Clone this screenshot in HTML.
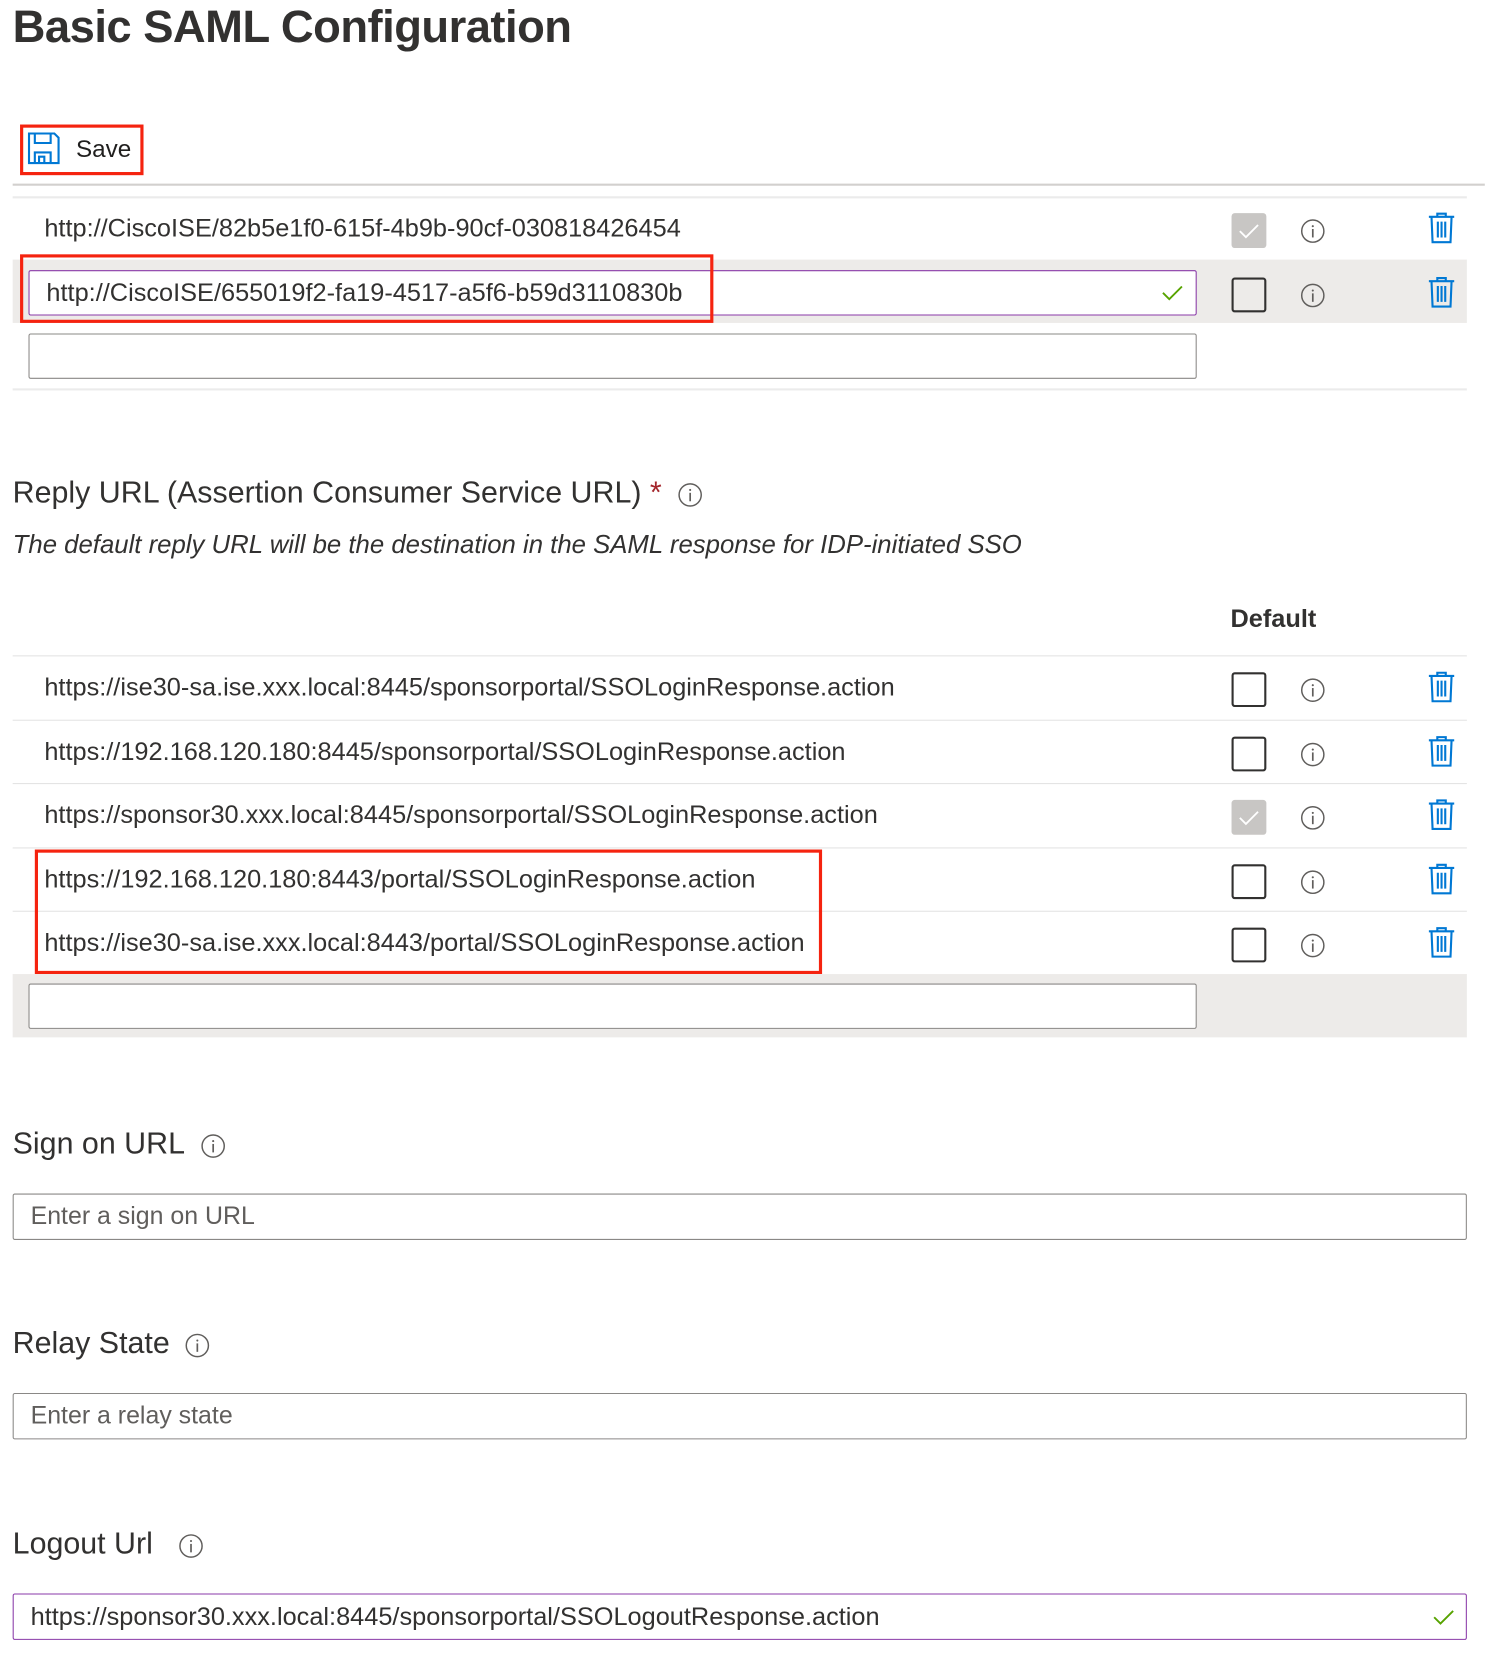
<!DOCTYPE html>
<html><head><meta charset="utf-8"><style>
html,body{margin:0;padding:0;background:#fff;width:1488px;height:1658px;overflow:hidden}
#w{position:absolute;left:0;top:0;width:1410px;height:1572px;transform:scale(1.0553);transform-origin:0 0;font-family:"Liberation Sans",sans-serif;color:#323130}
.a{position:absolute}
.t{position:absolute;font-size:24px;white-space:nowrap;line-height:1}
.h{position:absolute;font-size:28.8px;white-space:nowrap;line-height:1}
.hr{position:absolute;left:12px;width:1378px;height:1px;background:#e3e3e3}
.inp{position:absolute;box-sizing:border-box;border:1.5px solid #8a8886;border-radius:2px;background:#fff}
.cb{position:absolute;left:1167px;width:33px;height:33px;box-sizing:border-box;border:2px solid #323130;border-radius:3px}
.cbc{border:none;background:#c8c6c4}
.red{position:absolute;border:3px solid #f5230f;box-sizing:border-box}
</style></head><body><div id="w">
<svg width="0" height="0" style="position:absolute"><defs>
<symbol id="info" viewBox="0 0 24 24"><circle cx="12" cy="12" r="10.5" fill="none" stroke="#605e5c" stroke-width="1.4"/><rect x="11.2" y="10" width="1.6" height="8" fill="#605e5c"/><circle cx="12" cy="7.3" r="1" fill="#605e5c"/></symbol>
<symbol id="trash" viewBox="0 0 26 30"><path d="M9 4V1.5h8V4M1 4.5h24M3.5 4.5l1 24h17l1-24M9.5 9v15M13 9v15M16.5 9v15" fill="none" stroke="#0078d4" stroke-width="2"/></symbol>
<symbol id="chk" viewBox="0 0 24 24"><path d="M3 12.5l6 6L21 6.5" fill="none" stroke="currentColor" stroke-width="1.8"/></symbol>
</defs></svg>

<div class="a" style="left:12px;top:3px;font-size:43px;font-weight:bold;letter-spacing:-0.5px;color:#323130;white-space:nowrap;line-height:1.1">Basic SAML Configuration</div>

<div class="red" style="left:19px;top:118px;width:117px;height:48px"></div>
<svg class="a" style="left:26px;top:125px" width="31" height="31" viewBox="0 0 31 31"><path d="M1.5 1.5h24l4 4v24h-28z M7 1.5v9h15v-9 M7 29.5v-10h15v10 M11 29.5v-6h5v6" fill="none" stroke="#0078d4" stroke-width="2"/></svg>
<div class="t" style="left:72px;top:130px;font-size:23px;color:#201f1e">Save</div>

<div class="a" style="left:12px;top:174px;width:1395px;height:2px;background:#d2d0ce"></div>
<div class="hr" style="top:186px;height:2px;background:#ebebeb"></div>

<div class="t" style="left:42px;top:205px">http://CiscoISE/82b5e1f0-615f-4b9b-90cf-030818426454</div>
<div class="cb cbc" style="top:202px"><svg width="33" height="33" style="color:#fff"><use href="#chk" x="5" y="5" width="23" height="23"/></svg></div>
<svg class="a" style="left:1232px;top:207px" width="24" height="24"><use href="#info"/></svg>
<svg class="a" style="left:1353px;top:201px" width="26" height="30"><use href="#trash"/></svg>

<div class="a" style="left:12px;top:246px;width:1378px;height:60px;background:#edebe9"></div>
<div class="inp" style="left:27px;top:256px;width:1107px;height:43px;border-color:#8a3aa8"></div>
<div class="t" style="left:44px;top:266px">http://CiscoISE/655019f2-fa19-4517-a5f6-b59d3110830b</div>
<svg class="a" style="left:1099px;top:265px;color:#57a300" width="24" height="24"><use href="#chk"/></svg>
<div class="cb" style="top:263px"></div>
<svg class="a" style="left:1232px;top:268px" width="24" height="24"><use href="#info"/></svg>
<svg class="a" style="left:1353px;top:262px" width="26" height="30"><use href="#trash"/></svg>
<div class="red" style="left:19px;top:241px;width:657px;height:65px"></div>

<div class="inp" style="left:27px;top:316px;width:1107px;height:43px"></div>
<div class="hr" style="top:368px;height:2px;background:#ebebeb"></div>

<div class="h" style="left:12px;top:453px">Reply URL (Assertion Consumer Service URL) <span style="color:#a4262c">*</span></div>
<svg class="a" style="left:642px;top:457px" width="24" height="24"><use href="#info"/></svg>
<div class="t" style="left:12px;top:505px;font-size:24.4px;font-style:italic">The default reply URL will be the destination in the SAML response for IDP-initiated SSO</div>
<div class="t" style="left:1166px;top:575px;font-weight:bold">Default</div>

<div class="hr" style="top:621px"></div>
<div class="t" style="left:42px;top:640px">https://ise30-sa.ise.xxx.local:8445/sponsorportal/SSOLoginResponse.action</div>
<div class="cb" style="top:637px"></div>
<svg class="a" style="left:1232px;top:642px" width="24" height="24"><use href="#info"/></svg>
<svg class="a" style="left:1353px;top:636px" width="26" height="30"><use href="#trash"/></svg>

<div class="hr" style="top:682px"></div>
<div class="t" style="left:42px;top:701px">https://192.168.120.180:8445/sponsorportal/SSOLoginResponse.action</div>
<div class="cb" style="top:698px"></div>
<svg class="a" style="left:1232px;top:703px" width="24" height="24"><use href="#info"/></svg>
<svg class="a" style="left:1353px;top:697px" width="26" height="30"><use href="#trash"/></svg>

<div class="hr" style="top:742px"></div>
<div class="t" style="left:42px;top:761px">https://sponsor30.xxx.local:8445/sponsorportal/SSOLoginResponse.action</div>
<div class="cb cbc" style="top:758px"><svg width="33" height="33" style="color:#fff"><use href="#chk" x="5" y="5" width="23" height="23"/></svg></div>
<svg class="a" style="left:1232px;top:763px" width="24" height="24"><use href="#info"/></svg>
<svg class="a" style="left:1353px;top:757px" width="26" height="30"><use href="#trash"/></svg>

<div class="hr" style="top:803px"></div>
<div class="t" style="left:42px;top:822px">https://192.168.120.180:8443/portal/SSOLoginResponse.action</div>
<div class="cb" style="top:819px"></div>
<svg class="a" style="left:1232px;top:824px" width="24" height="24"><use href="#info"/></svg>
<svg class="a" style="left:1353px;top:818px" width="26" height="30"><use href="#trash"/></svg>

<div class="hr" style="top:863px"></div>
<div class="t" style="left:42px;top:882px">https://ise30-sa.ise.xxx.local:8443/portal/SSOLoginResponse.action</div>
<div class="cb" style="top:879px"></div>
<svg class="a" style="left:1232px;top:884px" width="24" height="24"><use href="#info"/></svg>
<svg class="a" style="left:1353px;top:878px" width="26" height="30"><use href="#trash"/></svg>
<div class="red" style="left:33px;top:805px;width:746px;height:118px"></div>

<div class="a" style="left:12px;top:923px;width:1378px;height:60px;background:#edebe9"></div>
<div class="inp" style="left:27px;top:932px;width:1107px;height:43px"></div>

<div class="h" style="left:12px;top:1070px">Sign on URL</div>
<svg class="a" style="left:190px;top:1074px" width="24" height="24"><use href="#info"/></svg>
<div class="inp" style="left:12px;top:1131px;width:1378px;height:44px"></div>
<div class="t" style="left:29px;top:1142px;font-size:23.6px;color:#605e5c">Enter a sign on URL</div>

<div class="h" style="left:12px;top:1259px">Relay State</div>
<svg class="a" style="left:175px;top:1263px" width="24" height="24"><use href="#info"/></svg>
<div class="inp" style="left:12px;top:1320px;width:1378px;height:44px"></div>
<div class="t" style="left:29px;top:1331px;font-size:23.6px;color:#605e5c">Enter a relay state</div>

<div class="h" style="left:12px;top:1449px">Logout Url</div>
<svg class="a" style="left:169px;top:1453px" width="24" height="24"><use href="#info"/></svg>
<div class="inp" style="left:12px;top:1510px;width:1378px;height:44px;border-color:#8a3aa8"></div>
<div class="t" style="left:29px;top:1521px">https://sponsor30.xxx.local:8445/sponsorportal/SSOLogoutResponse.action</div>
<svg class="a" style="left:1356px;top:1520px;color:#57a300" width="24" height="24"><use href="#chk"/></svg>
</div></body></html>
